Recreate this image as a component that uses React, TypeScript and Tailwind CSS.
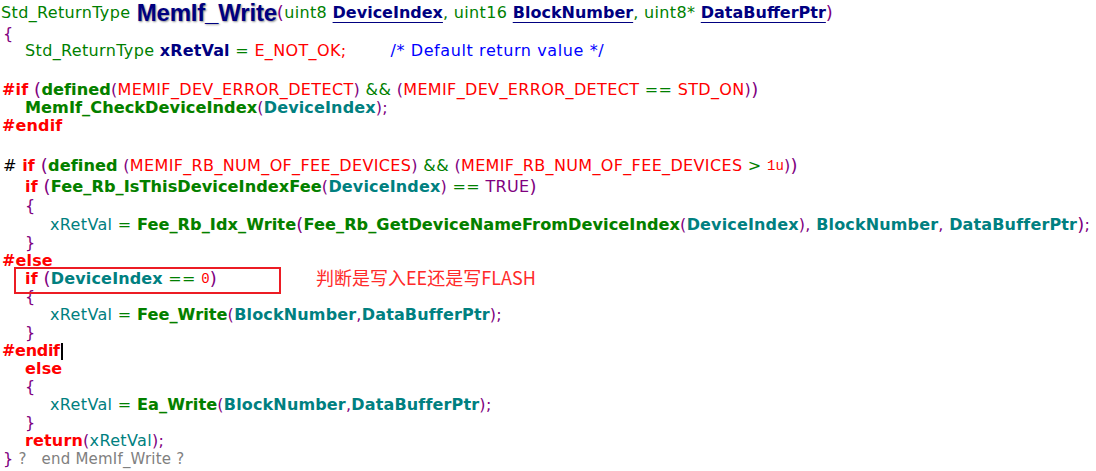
import React from "react";

type C = { children: React.ReactNode };
const G = ({ children }: C) => <span className="text-[#008000]">{children}</span>;
const GB = ({ children }: C) => (
  <span className="font-bold tracking-[0.15px] text-[#008000] [text-shadow:0.5px_0_0_rgba(200,190,0,0.45)]">{children}</span>
);
const R = ({ children }: C) => <span className="text-[#ff0000]">{children}</span>;
const RB = ({ children }: C) => <span className="font-bold tracking-[0.15px] text-[#ff0000]">{children}</span>;
const T = ({ children }: C) => <span className="text-[#008080]">{children}</span>;
const TB = ({ children }: C) => <span className="font-bold tracking-[0.15px] text-[#008080]">{children}</span>;
const P = ({ children }: C) => <span className="text-[#800080]">{children}</span>;
const PB = ({ children }: C) => <span className="text-[18px] leading-[20px] text-[#800080]">{children}</span>;
const NU = ({ children }: C) => (
  <span className="font-bold tracking-[0px] text-[#000080] underline decoration-[#000080] underline-offset-[4px]">{children}</span>
);
const M = ({ children }: C) => (
  <span className="font-['Liberation_Mono',monospace] text-[14px] tracking-normal text-[#ff0000]">{children}</span>
);

const Line = ({ children, h = "h-[18px]", indent = "" }: { children?: React.ReactNode; h?: string; indent?: string }) => (
  <div className={`flex items-center whitespace-pre ${h} ${indent}`}>{children}</div>
);

export default function App() {
  return (
    <div className="relative w-[1096px] h-[471px] overflow-hidden bg-white font-['DejaVu_Sans','Verdana',sans-serif] text-[16px] leading-[18px] tracking-[0.35px]">
      <div className="flex flex-col pl-[1px]">
        <Line h="h-[26px]">
          <G>Std_ReturnType </G>
          <span className="ml-[1px] font-['Liberation_Sans',Arial,sans-serif] text-[24px] leading-[26px] font-bold tracking-[-0.2px] text-[#000080] [text-shadow:1px_1px_2px_rgba(0,0,0,0.45)]">
            MemIf_Write
          </span>
          <PB>(</PB>
          <G>uint8 </G>
          <NU>DeviceIndex</NU>
          <G>, uint16 </G>
          <NU>BlockNumber</NU>
          <G>, uint8* </G>
          <NU>DataBufferPtr</NU>
          <PB>)</PB>
        </Line>
        <Line h="h-[16px]" indent="pl-[2px]">
          <P>{"{"}</P>
        </Line>
        <Line indent="pl-[24px]">
          <G>Std_ReturnType </G>
          <span className="font-bold tracking-[0.15px] text-[#000080]">xRetVal</span>
          <G> = </G>
          <R>E_NOT_OK;</R>
          <span className="ml-[44px] tracking-[0.6px] text-[#0000ff]">/* Default return value */</span>
        </Line>
        <Line h="h-[21px]" />
        <Line indent="pl-[1px]">
          <RB>#if </RB>
          <PB>(</PB>
          <GB>defined</GB>
          <P>(</P>
          <R>MEMIF_DEV_ERROR_DETECT</R>
          <P>)</P>
          <G> &amp;&amp; </G>
          <P>(</P>
          <R>MEMIF_DEV_ERROR_DETECT </R>
          <G>== </G>
          <R>STD_ON</R>
          <P>)</P>
          <PB>)</PB>
        </Line>
        <Line indent="pl-[24px]">
          <GB>MemIf_CheckDeviceIndex</GB>
          <P>(</P>
          <TB>DeviceIndex</TB>
          <P>);</P>
        </Line>
        <Line indent="pl-[1px]">
          <RB>#endif</RB>
        </Line>
        <Line h="h-[20px]" />
        <Line h="h-[22px]" indent="pl-[2px]">
          <span className="text-black"># </span>
          <RB>if </RB>
          <PB>(</PB>
          <GB>defined </GB>
          <P>(</P>
          <R>MEMIF_RB_NUM_OF_FEE_DEVICES</R>
          <P>)</P>
          <G> &amp;&amp; </G>
          <P>(</P>
          <R>MEMIF_RB_NUM_OF_FEE_DEVICES </R>
          <G>&gt; </G>
          <M>1u</M>
          <P>)</P>
          <PB>)</PB>
        </Line>
        <Line h="h-[19px]" indent="pl-[24px]">
          <RB>if </RB>
          <PB>(</PB>
          <GB>Fee_Rb_IsThisDeviceIndexFee</GB>
          <P>(</P>
          <TB>DeviceIndex</TB>
          <P>)</P>
          <G> == </G>
          <P>TRUE</P>
          <PB>)</PB>
        </Line>
        <Line h="h-[19px]" indent="pl-[24px]">
          <P>{"{"}</P>
        </Line>
        <Line h="h-[19px]" indent="pl-[49px]">
          <T>xRetVal</T>
          <G> = </G>
          <GB>Fee_Rb_Idx_Write</GB>
          <PB>(</PB>
          <GB>Fee_Rb_GetDeviceNameFromDeviceIndex</GB>
          <P>(</P>
          <TB>DeviceIndex</TB>
          <P>), </P>
          <TB>BlockNumber</TB>
          <P>, </P>
          <TB>DataBufferPtr</TB>
          <PB>)</PB>
          <P>;</P>
        </Line>
        <Line indent="pl-[24px]">
          <P>{"}"}</P>
        </Line>
        <Line indent="pl-[1px]">
          <RB>#else</RB>
        </Line>
        <Line indent="pl-[24px]">
          <div className="relative flex items-center">
            <RB>if </RB>
            <PB>(</PB>
            <TB>DeviceIndex</TB>
            <G> == </G>
            <M>0</M>
            <PB>)</PB>
            <div className="pointer-events-none absolute left-[-11px] top-[-2px] h-[27px] w-[267px] border-2 border-[#ec1c24]" />
            <span className="absolute left-[291px] top-[-4px] whitespace-nowrap font-['Noto_Sans_CJK_SC',sans-serif] text-[18px] leading-[24px] tracking-normal text-[#ff2a2a]">
              判断是写入EE还是写FLASH
            </span>
          </div>
        </Line>
        <Line indent="pl-[24px]">
          <P>{"{"}</P>
        </Line>
        <Line indent="pl-[49px]">
          <T>xRetVal</T>
          <G> = </G>
          <GB>Fee_Write</GB>
          <P>(</P>
          <TB>BlockNumber</TB>
          <P>,</P>
          <TB>DataBufferPtr</TB>
          <P>);</P>
        </Line>
        <Line indent="pl-[24px]">
          <P>{"}"}</P>
        </Line>
        <Line indent="pl-[1px]">
          <span className="font-bold tracking-[-0.3px] text-[#ff0000]">#endif</span>
          <span className="ml-[1px] inline-block h-[17px] w-[2px] bg-black" />
        </Line>
        <Line indent="pl-[24px]">
          <RB>else</RB>
        </Line>
        <Line indent="pl-[24px]">
          <P>{"{"}</P>
        </Line>
        <Line indent="pl-[49px]">
          <T>xRetVal</T>
          <G> = </G>
          <GB>Ea_Write</GB>
          <P>(</P>
          <TB>BlockNumber</TB>
          <P>,</P>
          <TB>DataBufferPtr</TB>
          <P>);</P>
        </Line>
        <Line indent="pl-[24px]">
          <P>{"}"}</P>
        </Line>
        <Line indent="pl-[24px]">
          <RB>return</RB>
          <P>(</P>
          <T>xRetVal</T>
          <P>);</P>
        </Line>
        <Line indent="pl-[2px]">
          <P>{"}"}</P>
          <span className="text-[15px] tracking-[0.2px] text-[#808080]"> ?   end MemIf_Write ?</span>
        </Line>
      </div>
    </div>
  );
}
